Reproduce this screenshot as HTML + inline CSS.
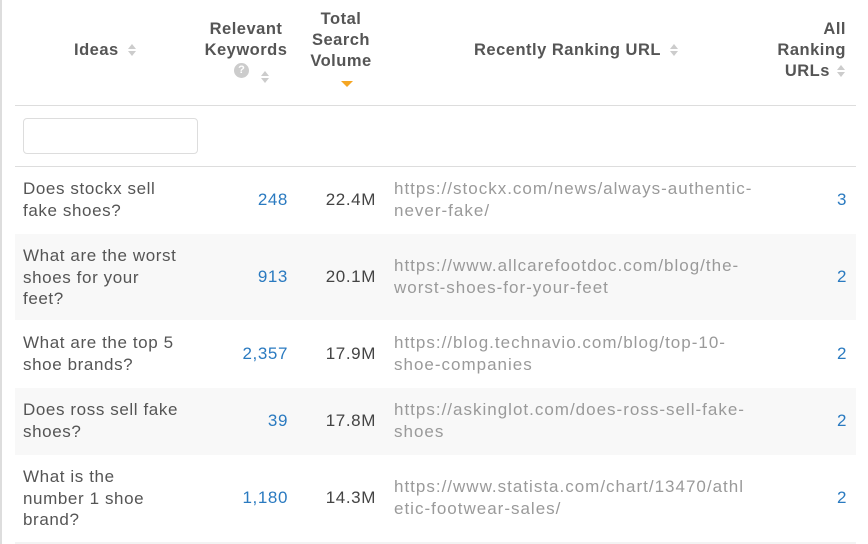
<!DOCTYPE html>
<html><head><meta charset="utf-8"><style>
*{margin:0;padding:0;box-sizing:border-box}
body{width:868px;height:544px;background:#fff;position:relative;overflow:hidden;font-family:"Liberation Sans",sans-serif;font-size:17px;line-height:21.5px;color:#555;letter-spacing:0.6px}
.a{position:absolute;white-space:nowrap}
.h{color:#555;font-weight:bold;font-size:16.5px;line-height:21px;text-align:center;letter-spacing:0.5px}
.r{text-align:right}
.lnk{color:#2a7ac0}
.url{color:#9a9a9a;letter-spacing:1px}
.sort{display:inline-block;width:9px;height:13px;vertical-align:middle;position:relative}
.sort:before{content:"";position:absolute;left:0;top:0;border-left:4.5px solid transparent;border-right:4.5px solid transparent;border-bottom:5px solid #ccc}
.sort:after{content:"";position:absolute;left:0;top:7px;border-left:4.5px solid transparent;border-right:4.5px solid transparent;border-top:5px solid #ccc}
.line{position:absolute;left:15px;width:841px;height:1px;background:#ddd}
.row{position:absolute;left:15px;width:841px}
</style></head><body>
<div class="a" style="left:0;top:0;width:2px;height:544px;background:#ddd"></div>

<div class="a h" style="top:40px;width:100px;text-align:left;left:74px">Ideas <span class="sort" style="margin-left:4px"></span></div>
<div class="a h" style="left:191px;top:19px;width:110px">Relevant<br>Keywords</div>
<div class="a" style="left:234px;top:63px;width:15px;height:15px;border-radius:50%;background:#ccc;color:#fff;font-size:11px;line-height:15px;text-align:center;font-weight:bold;letter-spacing:0">?</div>
<span class="a sort" style="left:261px;top:66px"></span>
<div class="a h" style="left:296px;top:9px;width:90px">Total<br>Search<br>Volume</div>
<div class="a" style="left:341px;top:81px;border-left:6px solid transparent;border-right:6px solid transparent;border-top:6px solid #f5a623"></div>
<div class="a h" style="left:474px;top:40px;width:230px;text-align:left">Recently Ranking URL <span class="sort" style="margin-left:4px"></span></div>
<div class="a h r" style="left:740px;top:19px;width:106px;text-align:right;line-height:21px">All<br>Ranking<br>URLs <span class="sort" style="margin-left:2px"></span></div>

<div class="line" style="top:105px"></div>
<div class="a" style="left:23px;top:118px;width:175px;height:36px;border:1px solid #ddd;border-radius:4px"></div>
<div class="line" style="top:166px"></div>

<div class="row" style="top:234px;height:86px;background:#f8f8f8"></div>
<div class="row" style="top:388px;height:67px;background:#f8f8f8"></div>
<div class="line" style="top:542px;height:2px;background:#f3f3f3"></div>

<div class="a" style="left:23px;top:178px">Does stockx sell<br>fake shoes?</div>
<div class="a r lnk" style="left:200px;top:189px;width:88px">248</div>
<div class="a r" style="left:290px;top:189px;width:86px;color:#444">22.4M</div>
<div class="a url" style="left:394px;top:178px">https://stockx.com/news/always-authentic-<br>never-fake/</div>
<div class="a r lnk" style="left:800px;top:189px;width:47px">3</div>

<div class="a" style="left:23px;top:245px">What are the worst<br>shoes for your<br>feet?</div>
<div class="a r lnk" style="left:200px;top:266px;width:88px">913</div>
<div class="a r" style="left:290px;top:266px;width:86px;color:#444">20.1M</div>
<div class="a url" style="left:394px;top:255px">https://www.allcarefootdoc.com/blog/the-<br>worst-shoes-for-your-feet</div>
<div class="a r lnk" style="left:800px;top:266px;width:47px">2</div>

<div class="a" style="left:23px;top:332px">What are the top 5<br>shoe brands?</div>
<div class="a r lnk" style="left:200px;top:343px;width:88px">2,357</div>
<div class="a r" style="left:290px;top:343px;width:86px;color:#444">17.9M</div>
<div class="a url" style="left:394px;top:332px">https://blog.technavio.com/blog/top-10-<br>shoe-companies</div>
<div class="a r lnk" style="left:800px;top:343px;width:47px">2</div>

<div class="a" style="left:23px;top:399px">Does ross sell fake<br>shoes?</div>
<div class="a r lnk" style="left:200px;top:410px;width:88px">39</div>
<div class="a r" style="left:290px;top:410px;width:86px;color:#444">17.8M</div>
<div class="a url" style="left:394px;top:399px">https://askinglot.com/does-ross-sell-fake-<br>shoes</div>
<div class="a r lnk" style="left:800px;top:410px;width:47px">2</div>

<div class="a" style="left:23px;top:466px">What is the<br>number 1 shoe<br>brand?</div>
<div class="a r lnk" style="left:200px;top:487px;width:88px">1,180</div>
<div class="a r" style="left:290px;top:487px;width:86px;color:#444">14.3M</div>
<div class="a url" style="left:394px;top:476px">https://www.statista.com/chart/13470/athl<br>etic-footwear-sales/</div>
<div class="a r lnk" style="left:800px;top:487px;width:47px">2</div>
</body></html>
